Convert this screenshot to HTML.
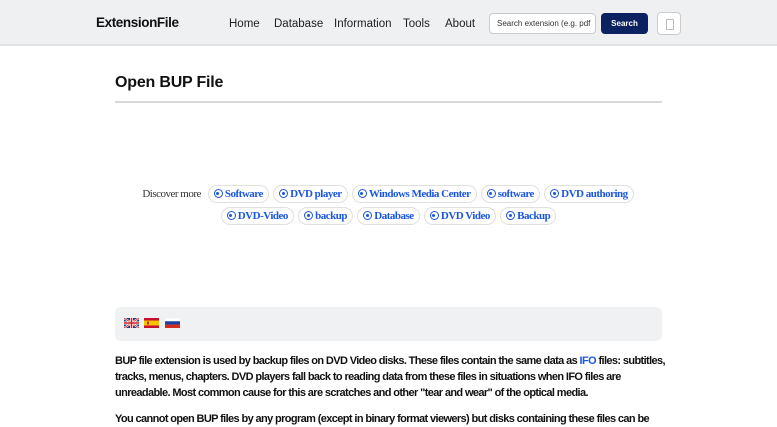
<!DOCTYPE html>
<html><head><meta charset="utf-8"><style>
*{margin:0;padding:0;box-sizing:border-box}
body{width:777px;height:423px;overflow:hidden;background:#fff;font-family:"Liberation Sans",Arial,sans-serif;color:#111;position:relative}
.nav{position:absolute;left:0;top:0;width:777px;height:46px;background:#eff0f2;border-bottom:2px solid #e2e3e6}
.abs{position:absolute}
.logo{left:96px;top:15px;font-weight:bold;font-size:13.5px;letter-spacing:-.4px}
.link{top:17px;font-size:11.5px;color:#222;line-height:14px}
.inp{left:489px;top:13px;width:107px;height:21px;border:1px solid #ccc;border-radius:4px;background:#fff;font-size:8px;padding:5px 7px;color:#333;white-space:nowrap;overflow:hidden}
.btn{left:601px;top:13px;width:47px;height:21px;border-radius:4px;background:#0c2260;color:#fff;font-size:8px;text-align:center;line-height:21px;font-weight:bold}
.sq{left:657px;top:12px;width:24px;height:23px;border:1px solid #ccc;border-radius:4px;background:#fff}
.sq:after{content:"";position:absolute;left:8px;top:6px;width:6px;height:9px;border:1px solid #bbb;border-radius:1px}
h1{position:absolute;left:115px;top:74px;font-size:16px;font-weight:bold;letter-spacing:-.2px}
.hr{left:115px;top:101px;width:547px;height:2px;background:#d8d8d8}
.chips{left:100px;width:577px;text-align:center;font-family:"Liberation Serif",serif;font-size:11px;font-weight:bold;white-space:nowrap;letter-spacing:-.5px}
.c{display:inline-block;border:1.5px solid #e0e0e0;border-radius:10px;padding:1px 5px;color:#1a56e0;margin:0 1px;line-height:14px}
.c b{display:inline-block;width:9px;height:9px;border:1.5px solid #1a56e0;border-radius:50%;vertical-align:-1px;margin-right:2px;position:relative}
.c b:after{content:"";position:absolute;left:1.5px;top:1.5px;width:3px;height:3px;background:#1a56e0;border-radius:50%}
.lang{left:115px;top:307px;width:547px;height:34px;background:#f0f1f3;border-radius:6px}
.f{position:absolute;top:11px;width:15px;height:10px}
.ln{position:absolute;left:115px;font-size:11px;line-height:16px;font-weight:bold;color:#111;letter-spacing:-.62px;white-space:nowrap}
.ln a{color:#1a56e0}
</style></head><body>
<div class="nav">
<div class="abs logo">ExtensionFile</div>
<div class="abs link" style="left:229px">Home</div>
<div class="abs link" style="left:274px">Database</div>
<div class="abs link" style="left:334px">Information</div>
<div class="abs link" style="left:403px">Tools</div>
<div class="abs link" style="left:445px">About</div>
<div class="abs inp">Search extension (e.g. pdf</div>
<div class="abs btn">Search</div>
<div class="abs sq"></div>
</div>
<h1>Open BUP File</h1>
<div class="abs hr"></div>
<div class="abs chips" style="top:185px"><span style="color:#333;margin-right:6px;font-weight:normal">Discover more</span><span class="c"><b></b>Software</span> <span class="c"><b></b>DVD player</span> <span class="c"><b></b>Windows Media Center</span> <span class="c"><b></b>software</span> <span class="c"><b></b>DVD authoring</span></div>
<div class="abs chips" style="top:207px"><span class="c"><b></b>DVD-Video</span> <span class="c"><b></b>backup</span> <span class="c"><b></b>Database</span> <span class="c"><b></b>DVD Video</span> <span class="c"><b></b>Backup</span></div>
<div class="abs lang">
<svg class="f" style="left:9px" viewBox="0 0 15 10"><rect width="15" height="10" fill="#233a7a"/><path d="M0 0L15 10M15 0L0 10" stroke="#fff" stroke-width="2"/><path d="M0 0L15 10M15 0L0 10" stroke="#c22" stroke-width=".8"/><path d="M7.5 0V10M0 5H15" stroke="#fff" stroke-width="3"/><path d="M7.5 0V10M0 5H15" stroke="#c22" stroke-width="1.6"/></svg>
<svg class="f" style="left:29px" viewBox="0 0 15 10"><rect width="15" height="10" fill="#c8102e"/><rect y="2.5" width="15" height="5" fill="#f5c400"/><rect x="3" y="3.5" width="2" height="3" fill="#b33"/></svg>
<svg class="f" style="left:50px" viewBox="0 0 15 10"><rect width="15" height="3.4" fill="#fff" stroke="#ddd" stroke-width=".3"/><rect y="3.3" width="15" height="3.4" fill="#1c3fa0"/><rect y="6.6" width="15" height="3.4" fill="#d52b1e"/></svg>
</div>
<div class="ln" style="top:353px">BUP file extension is used by backup files on DVD Video disks. These files contain the same data as <a>IFO</a> files: subtitles,</div>
<div class="ln" style="top:369px">tracks, menus, chapters. DVD players fall back to reading data from these files in situations when IFO files are</div>
<div class="ln" style="top:385px">unreadable. Most common cause for this are scratches and other "tear and wear" of the optical media.</div>
<div class="ln" style="top:411px">You cannot open BUP files by any program (except in binary format viewers) but disks containing these files can be</div>
</body></html>
